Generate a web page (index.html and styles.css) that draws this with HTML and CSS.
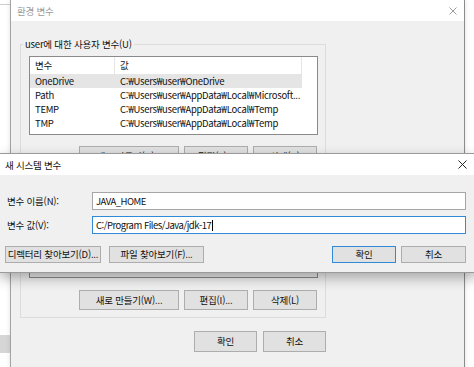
FILE: index.html
```html
<!DOCTYPE html>
<html lang="ko">
<head>
<meta charset="utf-8">
<title>환경 변수</title>
<link rel="stylesheet" href="styles.css">
</head>
<body>
<div class="desk">
  <div class="bg-line"></div>
  <div class="bg-block"></div>

  <section class="win main">
    <header class="titlebar">
      <span class="title inactive">환경 변수</span>
      <svg class="close" width="8" height="8" viewBox="0 0 8 8"><path d="M0.5 0.5L7.5 7.5M7.5 0.5L0.5 7.5" stroke="#9a9a9a" stroke-width="1"/></svg>
    </header>
    <div class="body">
      <fieldset class="group g1">
        <legend>user에 대한 사용자 변수(U)</legend>
        <div class="list list1">
          <div class="lhead"><span class="cell">변수</span><span class="cell">값</span></div>
          <div class="row sel"><span class="cell">OneDrive</span><span class="cell">C:<span class="won">₩</span>Users<span class="won">₩</span>user<span class="won">₩</span>OneDrive</span></div>
          <div class="row"><span class="cell">Path</span><span class="cell">C:<span class="won">₩</span>Users<span class="won">₩</span>user<span class="won">₩</span>AppData<span class="won">₩</span>Local<span class="won">₩</span>Microsoft...</span></div>
          <div class="row"><span class="cell">TEMP</span><span class="cell">C:<span class="won">₩</span>Users<span class="won">₩</span>user<span class="won">₩</span>AppData<span class="won">₩</span>Local<span class="won">₩</span>Temp</span></div>
          <div class="row"><span class="cell">TMP</span><span class="cell">C:<span class="won">₩</span>Users<span class="won">₩</span>user<span class="won">₩</span>AppData<span class="won">₩</span>Local<span class="won">₩</span>Temp</span></div>
        </div>
        <div class="btns">
          <button class="btn w-new">새로 만들기(N)...</button>
          <button class="btn w-sm">편집(E)...</button>
          <button class="btn w-sm">삭제(D)</button>
        </div>
      </fieldset>

      <fieldset class="group g2">
        <legend>시스템 변수(S)</legend>
        <div class="list list2">
          <div class="lhead"><span class="cell">변수</span><span class="cell">값</span></div>
          <div class="row"><span class="cell">ComSpec</span><span class="cell">C:<span class="won">₩</span>Windows<span class="won">₩</span>system32<span class="won">₩</span>cmd.exe</span></div>
          <div class="row"><span class="cell">OS</span><span class="cell">Windows_NT</span></div>
          <div class="row"><span class="cell">Path</span><span class="cell">C:<span class="won">₩</span>Windows<span class="won">₩</span>system32</span></div>
          <div class="hscroll"></div>
        </div>
        <div class="btns">
          <button class="btn w-new">새로 만들기(W)...</button>
          <button class="btn w-sm">편집(I)...</button>
          <button class="btn w-sm">삭제(L)</button>
        </div>
      </fieldset>

      <div class="footer">
        <button class="btn w-ft">확인</button>
        <button class="btn w-ft">취소</button>
      </div>
    </div>
  </section>

  <section class="win dlg">
    <header class="titlebar dtitle">
      <span class="title">새 시스템 변수</span>
      <svg class="close" width="9" height="9" viewBox="0 0 9 9"><path d="M0.5 0.5L8.5 8.5M8.5 0.5L0.5 8.5" stroke="#222" stroke-width="1"/></svg>
    </header>
    <div class="dbody">
      <div class="form">
        <label class="lbl">변수 이름(N):</label>
        <div class="input">JAVA_HOME</div>
        <label class="lbl">변수 값(V):</label>
        <div class="input focus">C:/Program Files/Java/jdk-17<span class="caret"></span></div>
      </div>
      <div class="dbtns">
        <button class="btn db w-dir">디렉터리 찾아보기(D)...</button>
        <button class="btn db w-file">파일 찾아보기(F)...</button>
        <button class="btn db w-ok default">확인</button>
        <button class="btn db w-cancel">취소</button>
      </div>
    </div>
  </section>
</div>
</body>
</html>
```

FILE: styles.css
```css
* { box-sizing: border-box; }

html, body {
  margin: 0;
  padding: 0;
  background: #ffffff;
}

body {
  font-family: "Noto Sans CJK KR", "Noto Sans", sans-serif;
  font-size: 9.5px;
  letter-spacing: -0.2px;
  color: #111;
}

.desk {
  position: relative;
  width: 474px;
  height: 367px;
  overflow: hidden;
  background: #ffffff;
}

.bg-line {
  position: absolute;
  left: 0;
  top: 4px;
  width: 10px;
  height: 1px;
  background: #cfcfcf;
}

.bg-block {
  position: absolute;
  left: 0;
  top: 335px;
  width: 10px;
  height: 18px;
  background: #d6d6d6;
}

.win {
  position: absolute;
  background: #f0f0f0;
}

.main {
  left: 10px;
  top: 0;
  width: 455px;
  height: 390px;
  border-left: 1px solid #a3a3a3;
  border-right: 1px solid #8c8c8c;
  box-shadow: 0 0 5px rgba(0, 0, 0, 0.12);
}

.titlebar {
  display: flex;
  align-items: center;
  justify-content: space-between;
  background: #ffffff;
}

.main .titlebar {
  height: 21px;
  padding: 0 7px 0 6px;
}

.title {
  line-height: 14px;
}

.title.inactive {
  color: #9a9a9a;
}

.close {
  display: block;
}

.main .body {
  padding: 16px 0 0 9px;
}

.group {
  width: 306px;
  margin: 0;
  border: 1px solid #dcdcdc;
  padding: 5px 7px 7px 2px;
}

.group legend {
  padding: 0 2px;
  line-height: 14px;
}

.g2 {
  margin-top: 4px;
}

.list {
  position: relative;
  margin-left: 6px;
  border: 1px solid #8a8a8a;
  background: #ffffff;
  overflow: hidden;
}

.list1 { height: 79px; }
.list2 { height: 81px; }

.lhead, .row {
  display: grid;
  grid-template-columns: 85px 187px;
  width: 272px;
  white-space: nowrap;
}

.lhead {
  height: 17px;
  line-height: 17px;
}

.lhead .cell {
  border-right: 1px solid #e5e5e5;
}

.row {
  height: 14px;
  line-height: 14px;
  letter-spacing: -0.3px;
}

.row.sel {
  background: #e5e5e5;
}

.cell {
  padding-left: 5px;
  overflow: hidden;
}

.won {
  font-family: "Noto Sans", "DejaVu Sans", sans-serif;
  font-size: 8.5px;
}

.hscroll {
  position: absolute;
  left: 0;
  right: 0;
  bottom: 0;
  height: 15px;
  background: #e9e9e9;
  border-top: 1px solid #dcdcdc;
}

.btns {
  display: flex;
  justify-content: flex-end;
  gap: 5px;
  margin-top: 11px;
  padding-right: 1px;
}

.g2 .btns {
  margin-top: 12px;
}

.btn {
  display: block;
  height: 20px;
  padding: 0;
  border: 1px solid #adadad;
  background: #e1e1e1;
  font: inherit;
  letter-spacing: inherit;
  color: #111;
  line-height: 18px;
  text-align: center;
  white-space: nowrap;
}

.w-new { width: 100px; }
.w-sm { width: 64px; }

.footer {
  display: flex;
  justify-content: flex-end;
  gap: 6px;
  width: 306px;
  margin-top: 13px;
}

.w-ft {
  width: 63px;
  height: 21px;
  line-height: 19px;
}

/* dialog */
.dlg {
  left: -1px;
  top: 153px;
  width: 479px;
  border: 1px solid #9a9a9a;
  box-shadow: 0 5px 12px rgba(0, 0, 0, 0.3);
}

.dtitle {
  height: 21px;
  padding: 0 10px 0 5px;
}

.dbody {
  padding: 17px 11px 9px 0;
}

.form {
  display: grid;
  grid-template-columns: 92px 1fr;
  row-gap: 6px;
  align-items: center;
}

.lbl {
  padding-left: 7px;
  line-height: 14px;
}

.input {
  height: 18px;
  border: 1px solid #a6a6a6;
  background: #ffffff;
  padding-left: 3px;
  line-height: 16px;
  letter-spacing: -0.5px;
  white-space: nowrap;
}

.input.focus {
  border-color: #2f8ad8;
}

.caret {
  display: inline-block;
  width: 1px;
  height: 11px;
  margin-left: 1px;
  background: #000;
  vertical-align: -2px;
}

.dbtns {
  display: flex;
  align-items: center;
  margin-top: 12px;
  padding-left: 5px;
}

.btn.db {
  height: 17px;
  line-height: 15px;
}

.w-dir { width: 96px; }
.w-file { width: 95px; margin-left: 8px; }
.w-ok { width: 64px; margin-left: auto; }
.w-cancel { width: 65px; margin-left: 5px; }

.btn.default {
  border-color: #2f8ad8;
}
```
